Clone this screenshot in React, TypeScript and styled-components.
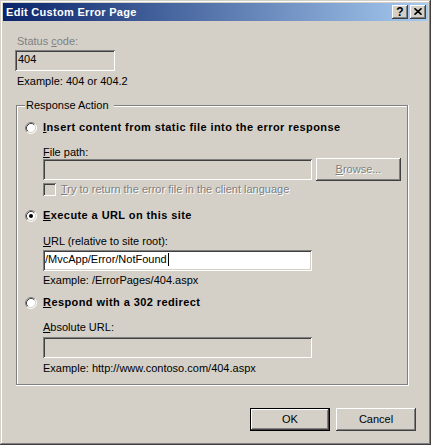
import React from "react";
import styled, { createGlobalStyle } from "styled-components";

const FACE = "#d4d0c8";
const SHADOW = "#808080";
const DARK = "#404040";

const GlobalStyle = createGlobalStyle`
  html, body {
    margin: 0;
    padding: 0;
    background: ${FACE};
  }
  body {
    font-family: "Liberation Sans", Arial, sans-serif;
    font-size: 11px;
    line-height: 13px;
    color: #000;
  }
`;

// classic radio mark, 12x12
const RadioMark = ({ checked }: { checked?: boolean }) => (
  <RadioSvg width="12" height="12" viewBox="0 0 12 12">
    <circle cx="6" cy="6" r="5" fill="#fff" />
    <path d="M2.11 9.89 A5.5 5.5 0 0 1 9.89 2.11" stroke={SHADOW} fill="none" />
    <path d="M9.89 2.11 A5.5 5.5 0 0 1 2.11 9.89" stroke="#fff" fill="none" />
    <path d="M2.82 9.18 A4.5 4.5 0 0 1 9.18 2.82" stroke={DARK} fill="none" />
    <path d="M9.18 2.82 A4.5 4.5 0 0 1 2.82 9.18" stroke={FACE} fill="none" />
    {checked && <circle cx="6" cy="6" r="2" fill="#000" />}
  </RadioSvg>
);

const App = () => {
  return (
    <>
      <GlobalStyle />
      <SWindow>
        <STitleBar>
          <STitle>Edit Custom Error Page</STitle>
          <SCaptionButtons>
            <SCaptionButton aria-label="Help">
              <span>?</span>
            </SCaptionButton>
            <SCaptionButton aria-label="Close">
              <svg width="8" height="7" viewBox="0 0 8 7">
                <path d="M0.5 0.3 L7.5 6.7 M7.5 0.3 L0.5 6.7" stroke="#000" strokeWidth="1.6" />
              </svg>
            </SCaptionButton>
          </SCaptionButtons>
        </STitleBar>

        <SClient>
          <SLabel $mt={13} $indent={2} $disabled>
            Status <u>c</u>ode:
          </SLabel>
          <STextBox $mt={2} $width={100} $disabled $pad={3}>
            404
          </STextBox>
          <SLabel $mt={4} $indent={2}>
            Example: 404 or 404.2
          </SLabel>

          <SGroup>
            <SGroupHeader>
              <SHeaderLead />
              <SLegend>Response Action</SLegend>
              <SHeaderRest />
            </SGroupHeader>
            <SGroupBody>
              <SRadioRow $mt={0}>
                <RadioMark />
                <SRadioLabel>
                  <u>I</u>nsert content from static file into the error response
                </SRadioLabel>
              </SRadioRow>
              <SIndent>
                <SLabel $mt={12}>
                  <u>F</u>ile path:
                </SLabel>
                <SFieldRow>
                  <STextBox $width={269} $disabled />
                  <SButton $width={85} $inRow disabled>
                    <u>B</u>rowse...
                  </SButton>
                </SFieldRow>
                <SCheckRow>
                  <SCheckBox />
                  <SLabel $disabled $emboss>
                    <u>T</u>ry to return the error file in the client language
                  </SLabel>
                </SCheckRow>
              </SIndent>

              <SRadioRow $mt={13}>
                <RadioMark checked />
                <SRadioLabel>
                  <u>E</u>xecute a URL on this site
                </SRadioLabel>
              </SRadioRow>
              <SIndent>
                <SLabel $mt={13}>
                  <u>U</u>RL (relative to site root):
                </SLabel>
                <STextBox $mt={2} $width={269}>
                  /MvcApp/Error/NotFound
                  <SCaret />
                </STextBox>
                <SLabel $mt={3}>Example: /ErrorPages/404.aspx</SLabel>
              </SIndent>

              <SRadioRow $mt={9}>
                <RadioMark />
                <SRadioLabel>
                  <u>R</u>espond with a 302 redirect
                </SRadioLabel>
              </SRadioRow>
              <SIndent>
                <SLabel $mt={12}>
                  <u>A</u>bsolute URL:
                </SLabel>
                <STextBox $mt={3} $width={269} $disabled />
                <SLabel $mt={4}>Example: http://www.contoso.com/404.aspx</SLabel>
              </SIndent>
            </SGroupBody>
          </SGroup>

          <SButtonRow>
            <SButton $width={80} $isDefault>
              OK
            </SButton>
            <SButton $width={80}>Cancel</SButton>
          </SButtonRow>
        </SClient>
      </SWindow>
    </>
  );
};

export default App;

const SWindow = styled.div`
  box-sizing: border-box;
  width: 431px;
  height: 445px;
  padding: 3px;
  display: flex;
  flex-direction: column;
  background: ${FACE};
  box-shadow: inset -1px -1px 0 ${DARK}, inset 1px 1px 0 ${FACE},
    inset -2px -2px 0 ${SHADOW}, inset 2px 2px 0 #fff;
`;

const STitleBar = styled.div`
  height: 18px;
  display: flex;
  align-items: center;
  justify-content: space-between;
  padding: 0 2px;
  background: linear-gradient(to right, #0a246a, #a6caf0);
`;

const STitle = styled.div`
  color: #fff;
  font-weight: bold;
  font-size: 11px;
  line-height: 17px;
  letter-spacing: 0.3px;
  padding-left: 1px;
  white-space: nowrap;
`;

const SCaptionButtons = styled.div`
  display: flex;
  gap: 2px;
`;

const SCaptionButton = styled.div`
  width: 16px;
  height: 14px;
  display: flex;
  align-items: center;
  justify-content: center;
  background: ${FACE};
  box-shadow: inset -1px -1px 0 ${DARK}, inset 1px 1px 0 #fff,
    inset -2px -2px 0 ${SHADOW};
  font-weight: bold;
  font-size: 12px;
  line-height: 14px;
  color: #000;

  & span {
    margin-top: -1px;
  }
  & svg {
    margin-top: -1px;
  }
`;

const SClient = styled.div`
  flex: 1;
  display: flex;
  flex-direction: column;
  align-items: flex-start;
  margin-top: 1px;
  padding: 0 12px;
`;

const SLabel = styled.div<{
  $mt?: number;
  $indent?: number;
  $disabled?: boolean;
  $emboss?: boolean;
}>`
  margin-top: ${p => p.$mt ?? 0}px;
  padding-left: ${p => p.$indent ?? 0}px;
  height: 13px;
  white-space: nowrap;
  color: ${p => (p.$disabled ? SHADOW : "#000")};
  text-shadow: ${p => (p.$emboss ? "1px 1px 0 #fff" : "none")};

  & u {
    text-underline-offset: 1px;
  }
`;

const STextBox = styled.div<{
  $mt?: number;
  $width: number;
  $disabled?: boolean;
  $pad?: number;
}>`
  box-sizing: border-box;
  margin-top: ${p => p.$mt ?? 0}px;
  width: ${p => p.$width}px;
  height: 21px;
  padding: 3px 2px 0 ${p => p.$pad ?? 2}px;
  display: flex;
  align-items: flex-start;
  white-space: nowrap;
  background: ${p => (p.$disabled ? FACE : "#fff")};
  box-shadow: inset 1px 1px 0 ${SHADOW}, inset -1px -1px 0 #fff,
    inset 2px 2px 0 ${DARK}, inset -2px -2px 0 ${FACE};
`;

const SCaret = styled.span`
  display: inline-block;
  width: 1px;
  height: 13px;
  margin-left: 1px;
  background: #000;
`;

const SGroup = styled.div`
  align-self: stretch;
  margin: 11px 8px 0 1px;
  display: flex;
  flex-direction: column;
`;

const SGroupHeader = styled.div`
  display: flex;
  height: 13px;
`;

const SHeaderLead = styled.div`
  box-sizing: border-box;
  width: 9px;
  height: 7px;
  margin-top: 6px;
  border-top: 1px solid ${SHADOW};
  border-left: 1px solid ${SHADOW};
  box-shadow: inset 1px 1px 0 #fff;
`;

const SLegend = styled.div`
  padding: 0 5px 0 1px;
  white-space: nowrap;
`;

const SHeaderRest = styled.div`
  flex: 1;
  box-sizing: border-box;
  height: 7px;
  margin-top: 6px;
  border-top: 1px solid ${SHADOW};
  border-right: 1px solid ${SHADOW};
  box-shadow: inset 0 1px 0 #fff, 1px 0 0 #fff;
`;

const SGroupBody = styled.div`
  padding: 9px 0 9px 8px;
  border: 1px solid ${SHADOW};
  border-top: none;
  box-shadow: inset 1px 0 0 #fff, 1px 0 0 #fff, 0 1px 0 #fff, 1px 1px 0 #fff;
  display: flex;
  flex-direction: column;
  align-items: flex-start;
`;

const SRadioRow = styled.div<{ $mt: number }>`
  margin-top: ${p => p.$mt}px;
  display: flex;
  align-items: flex-start;
  gap: 6px;
  height: 13px;
`;

const RadioSvg = styled.svg`
  display: block;
  margin-top: 1px;
  flex-shrink: 0;
`;

const SRadioLabel = styled.div`
  font-weight: bold;
  letter-spacing: 0.42px;
  white-space: nowrap;
`;

const SIndent = styled.div`
  margin-left: 18px;
  display: flex;
  flex-direction: column;
  align-items: flex-start;
`;

const SFieldRow = styled.div`
  display: flex;
  align-items: center;
  gap: 4px;
`;

const SCheckRow = styled.div`
  margin-top: 3px;
  display: flex;
  align-items: flex-start;
  gap: 5px;
  height: 13px;
`;

const SCheckBox = styled.span`
  display: block;
  width: 13px;
  height: 13px;
  background: ${FACE};
  box-shadow: inset 1px 1px 0 ${SHADOW}, inset -1px -1px 0 #fff,
    inset 2px 2px 0 ${DARK}, inset -2px -2px 0 ${FACE};
`;

const SButtonRow = styled.div`
  align-self: stretch;
  margin-top: 23px;
  display: flex;
  justify-content: flex-end;
  gap: 6px;
`;

const SButton = styled.button<{
  $width: number;
  $isDefault?: boolean;
  $inRow?: boolean;
}>`
  box-sizing: border-box;
  width: ${p => p.$width}px;
  height: 23px;
  margin: ${p => (p.$inRow ? "-1px 0" : "0")};
  padding: 0;
  font-family: inherit;
  font-size: 11px;
  line-height: 13px;
  color: #000;
  background: ${FACE};
  border: ${p => (p.$isDefault ? "1px solid #000" : "none")};
  box-shadow: inset -1px -1px 0 ${DARK}, inset 1px 1px 0 #fff,
    inset -2px -2px 0 ${SHADOW};
  cursor: default;

  &:disabled {
    color: ${SHADOW};
    text-shadow: 1px 1px 0 #fff;
  }
  & u {
    text-underline-offset: 1px;
  }
`;
